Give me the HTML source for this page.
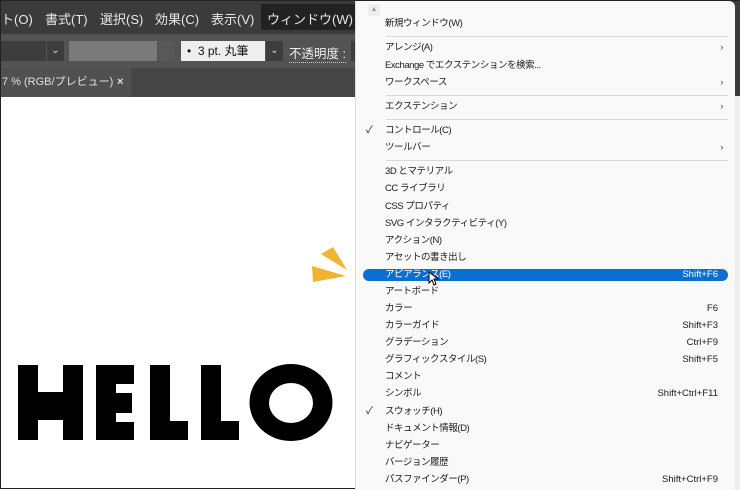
<!DOCTYPE html><html><head><meta charset="utf-8"><style>
*{margin:0;padding:0;box-sizing:border-box}
body{width:740px;height:489px;overflow:hidden;position:relative;background:#fff;font-family:"Liberation Sans","Noto Sans CJK JP",sans-serif;border:1px solid #222}
.a{position:absolute}
.mb{left:0;top:0;width:740px;height:33px;background:#3b3b3b;color:#e8e8e8;font-size:13px}
.mb span{position:absolute;top:8px}
.tb{left:0;top:33px;width:740px;height:34px;background:#535353}
.tr{left:0;top:67px;width:740px;height:29px;background:#464646}
.menu{left:354px;top:0;width:380px;height:489px;background:#f9f9f9;border-left:1px solid #ddd;border-radius:0 6px 0 0;font-size:9.5px;color:#1a1a1a}
.it{position:absolute;left:29px;height:14px;line-height:14px;width:333px;letter-spacing:-0.45px}
.sc{position:absolute;right:0;top:0;letter-spacing:0}
.sep{position:absolute;left:8px;width:364px;height:1px;background:#d8d8d8}
.ck{position:absolute;left:-19px;font-size:10px}
.ar{position:absolute;right:-5px;top:0;color:#444}
</style></head><body>
<div class="a mb"><span style="left:0">ト(O)</span><span style="left:44px">書式(T)</span><span style="left:99px">選択(S)</span><span style="left:154px">効果(C)</span><span style="left:210px">表示(V)</span>
<div class="a" style="left:260px;top:3px;width:94px;height:26px;background:#222"></div><span style="left:266px">ウィンドウ(W)</span></div>
<div class="a tb">
<div class="a" style="left:0;top:7px;width:45px;height:20px;background:#3d3d3d"></div>
<div class="a" style="left:46px;top:7px;width:17px;height:20px;background:#3d3d3d;color:#ddd;font-size:10px;text-align:center;line-height:20px">⌄</div>
<div class="a" style="left:68px;top:7px;width:88px;height:20px;background:#7a7a7a"></div>
<div class="a" style="left:157px;top:7px;width:17px;height:20px;background:#585858"></div>
<div class="a" style="left:180px;top:7px;width:84px;height:20px;background:#eee;color:#111;font-size:12px;line-height:20px;padding-left:6px">•&nbsp;&nbsp;3 pt. 丸筆</div>
<div class="a" style="left:265px;top:7px;width:17px;height:20px;background:#3d3d3d;color:#ddd;font-size:10px;text-align:center;line-height:20px">⌄</div>
<div class="a" style="left:288px;top:9px;color:#eee;font-size:12.5px;border-bottom:1px dotted #ccc">不透明度 :</div>
<div class="a" style="left:350px;top:7px;width:4px;height:20px;background:#3d3d3d"></div>
</div>
<div class="a tr"><div class="a" style="left:0;top:0;width:130px;height:29px;background:#505050;color:#e0e0e0;font-size:11px;line-height:29px;padding-left:1px">7 % (RGB/プレビュー)<span style="position:absolute;left:116px;font-weight:bold">×</span></div></div>
<div class="a" style="left:734px;top:0;width:6px;height:95px;background:#3b3b3b"></div>
<div class="a" style="left:734px;top:95px;width:6px;height:394px;background:#eee"></div>
<svg class="a" style="left:0;top:0" width="354" height="489">
<polygon points="320,253 332,246 346,269" fill="#f0b430"/>
<polygon points="311,265 345,275 312,281" fill="#f0b430"/>
<g fill="#000">
<rect x="17" y="364" width="20" height="75"/><rect x="62" y="364" width="20" height="75"/><rect x="17" y="391" width="65" height="28"/>
<rect x="95" y="364" width="20" height="75"/><rect x="95" y="364" width="38" height="19"/><rect x="95" y="392" width="36" height="20"/><rect x="95" y="421" width="38" height="18"/>
<rect x="149" y="364" width="20" height="75"/><rect x="149" y="420" width="38" height="19"/>
<rect x="200" y="364" width="20" height="75"/><rect x="200" y="420" width="38" height="19"/>
<ellipse cx="290" cy="401.5" rx="41.5" ry="38.5"/>
</g><ellipse cx="290" cy="402" rx="22" ry="20" fill="#fff"/>
</svg>
<div class="a menu">
<div class="a" style="left:12px;top:3px;width:12px;height:12px;background:#eee;color:#999;font-size:7px;text-align:center;line-height:12px">▲</div>
<div class="it" style="top:16px">新規ウィンドウ(W)</div>
<div class="sep" style="top:35px;left:30px;width:342px"></div>
<div class="it" style="top:40px">アレンジ(A)<span class="ar">›</span></div>
<div class="it" style="top:58px">Exchange でエクステンションを検索...</div>
<div class="it" style="top:75px">ワークスペース<span class="ar">›</span></div>
<div class="sep" style="top:94px;left:30px;width:342px"></div>
<div class="it" style="top:99px">エクステンション<span class="ar">›</span></div>
<div class="sep" style="top:118px;left:30px;width:342px"></div>
<div class="it" style="top:123px"><span class="ck">✓</span>コントロール(C)</div>
<div class="it" style="top:140px">ツールバー<span class="ar">›</span></div>
<div class="sep" style="top:159px;left:30px;width:342px"></div>
<div class="it" style="top:164px">3D とマテリアル</div>
<div class="it" style="top:181px">CC ライブラリ</div>
<div class="it" style="top:199px">CSS プロパティ</div>
<div class="it" style="top:216px">SVG インタラクティビティ(Y)</div>
<div class="it" style="top:233px">アクション(N)</div>
<div class="it" style="top:250px">アセットの書き出し</div>
<div class="a" style="left:7px;top:268px;width:365px;height:12px;background:#0a6fd0;border-radius:6px"></div>
<div class="it" style="top:267px;color:#fff">アピアランス(E)<span class="sc">Shift+F6</span></div>
<div class="it" style="top:284px">アートボード</div>
<div class="it" style="top:301px">カラー<span class="sc">F6</span></div>
<div class="it" style="top:318px">カラーガイド<span class="sc">Shift+F3</span></div>
<div class="it" style="top:335px">グラデーション<span class="sc">Ctrl+F9</span></div>
<div class="it" style="top:352px">グラフィックスタイル(S)<span class="sc">Shift+F5</span></div>
<div class="it" style="top:369px">コメント</div>
<div class="it" style="top:386px">シンボル<span class="sc">Shift+Ctrl+F11</span></div>
<div class="it" style="top:404px"><span class="ck">✓</span>スウォッチ(H)</div>
<div class="it" style="top:421px">ドキュメント情報(D)</div>
<div class="it" style="top:438px">ナビゲーター</div>
<div class="it" style="top:455px">バージョン履歴</div>
<div class="it" style="top:472px">パスファインダー(P)<span class="sc">Shift+Ctrl+F9</span></div>
<svg class="a" style="left:72px;top:270px" width="12" height="16"><path d="M1 1 L1 12 L4 9 L6 14 L8 13 L6 8 L10 8 Z" fill="#fff" stroke="#000" stroke-width="1"/></svg>
</div>
</body></html>
